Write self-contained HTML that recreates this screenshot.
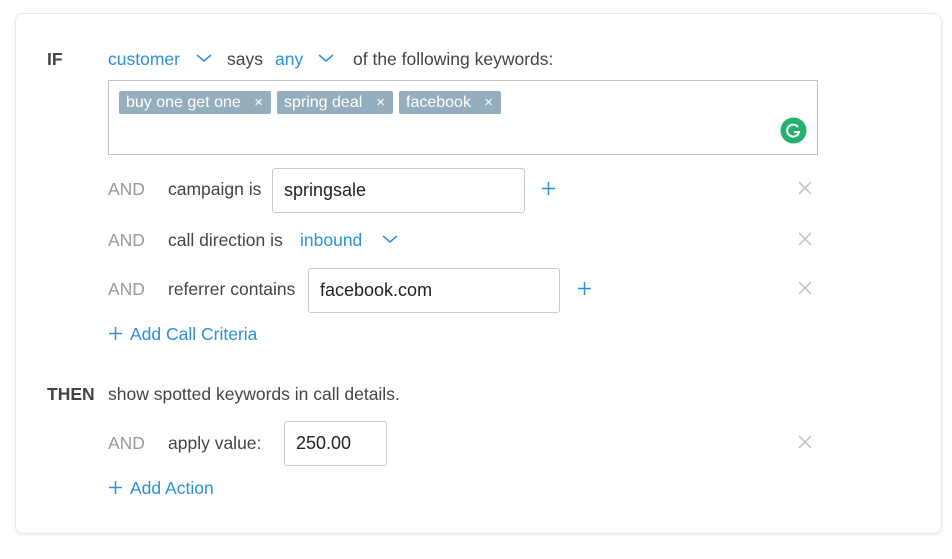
<!DOCTYPE html><html><head><style>
body{margin:0;width:952px;height:559px;background:#fff;font-family:"Liberation Sans",sans-serif;font-size:17.5px;color:#444;position:relative;overflow:hidden}
.a{position:absolute;white-space:nowrap;line-height:20px}
.card{position:absolute;left:15px;top:13px;width:925px;height:519px;border:1px solid #e6eaee;border-radius:8px;box-shadow:0 1px 3px rgba(0,0,0,.08)}
.b{color:#2b90d9}.g{color:#999}.k{font-weight:bold;color:#444}
.tag{position:absolute;top:91px;height:23px;background:#94aebe;color:#fff;border-radius:2px;font-size:16px;line-height:23px;padding-left:7px;white-space:nowrap}
.tag i{font-style:normal;position:absolute;right:8px;top:0;font-size:15px}
.in{position:absolute;border:1px solid #c8c8c8;border-radius:3px;background:#fff;color:#222;font-size:18px;line-height:43px;padding-left:11px;box-sizing:border-box}
svg{position:absolute}
</style></head><body>
<div class="card"></div>
<div class="a k" style="left:47px;top:49px">IF</div>
<div class="a b" style="left:108px;top:49px">customer</div>
<svg style="left:196px;top:53px" width="16" height="10"><path d="M1 2l7 6 7-6" stroke="#2b90d9" stroke-width="1.5" fill="none"/></svg>
<div class="a" style="left:227px;top:49px">says</div>
<div class="a b" style="left:275px;top:49px">any</div>
<svg style="left:318px;top:53px" width="16" height="10"><path d="M1 2l7 6 7-6" stroke="#2b90d9" stroke-width="1.5" fill="none"/></svg>
<div class="a" style="left:353px;top:49px">of the following keywords:</div>
<div style="position:absolute;left:108px;top:80px;width:708px;height:73px;border:1px solid #c0c0c0"></div>
<div class="tag" style="left:119px;width:145px">buy one get one<i>×</i></div>
<div class="tag" style="left:277px;width:109px">spring deal<i>×</i></div>
<div class="tag" style="left:399px;width:95px">facebook<i>×</i></div>
<svg style="left:780px;top:117px" width="27" height="27"><circle cx="13.5" cy="13.5" r="13" fill="#26b06f"/><path d="M18 10a6 6 0 1 0 1 5h-5" stroke="#fff" stroke-width="2" fill="none"/><path d="M17 19l2-4" stroke="#fff" stroke-width="2"/></svg>
<div class="a g" style="left:108px;top:179px">AND</div>
<div class="a" style="left:168px;top:179px">campaign is</div>
<div class="in" style="left:272px;top:168px;width:253px;height:45px">springsale</div>
<div class="a g" style="left:108px;top:230px">AND</div>
<div class="a" style="left:168px;top:230px">call direction is</div>
<div class="a b" style="left:300px;top:230px">inbound</div>
<svg style="left:382px;top:234px" width="16" height="10"><path d="M1 2l7 6 7-6" stroke="#2b90d9" stroke-width="1.5" fill="none"/></svg>
<div class="a g" style="left:108px;top:279px">AND</div>
<div class="a" style="left:168px;top:279px">referrer contains</div>
<div class="in" style="left:308px;top:268px;width:252px;height:45px">facebook.com</div>
<svg style="left:541px;top:181px" width="15" height="15"><path d="M7.5 1v13M1 7.5h13" stroke="#2b90d9" stroke-width="1.5"/></svg>
<svg style="left:577px;top:281px" width="15" height="15"><path d="M7.5 1v13M1 7.5h13" stroke="#2b90d9" stroke-width="1.5"/></svg>
<svg style="left:798px;top:181px" width="14" height="14"><path d="M1 1l12 12M13 1L1 13" stroke="#bbb" stroke-width="1.3"/></svg>
<svg style="left:798px;top:232px" width="14" height="14"><path d="M1 1l12 12M13 1L1 13" stroke="#bbb" stroke-width="1.3"/></svg>
<svg style="left:798px;top:281px" width="14" height="14"><path d="M1 1l12 12M13 1L1 13" stroke="#bbb" stroke-width="1.3"/></svg>
<svg style="left:798px;top:435px" width="14" height="14"><path d="M1 1l12 12M13 1L1 13" stroke="#bbb" stroke-width="1.3"/></svg>
<svg style="left:108px;top:326px" width="15" height="15"><path d="M7.5 1v13M1 7.5h13" stroke="#2b90d9" stroke-width="1.5"/></svg>
<div class="a b" style="left:130px;top:324px">Add Call Criteria</div>
<div class="a k" style="left:47px;top:384px">THEN</div>
<div class="a" style="left:108px;top:384px">show spotted keywords in call details.</div>
<div class="a g" style="left:108px;top:433px">AND</div>
<div class="a" style="left:168px;top:433px">apply value:</div>
<div class="in" style="left:284px;top:421px;width:103px;height:45px">250.00</div>
<svg style="left:108px;top:480px" width="15" height="15"><path d="M7.5 1v13M1 7.5h13" stroke="#2b90d9" stroke-width="1.5"/></svg>
<div class="a b" style="left:130px;top:478px">Add Action</div>
</body></html>
